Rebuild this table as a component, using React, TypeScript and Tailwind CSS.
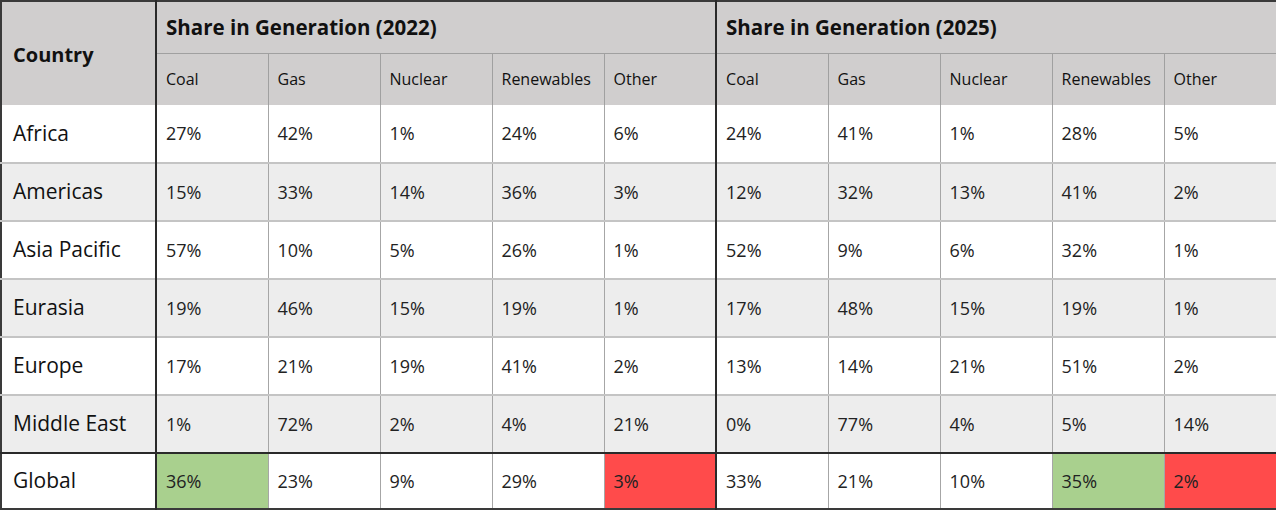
import React from "react";

const cats = ["Coal", "Gas", "Nuclear", "Renewables", "Other"];

type Row = { name: string; a: string[]; b: string[] };

const rows: Row[] = [
  { name: "Africa", a: ["27%", "42%", "1%", "24%", "6%"], b: ["24%", "41%", "1%", "28%", "5%"] },
  { name: "Americas", a: ["15%", "33%", "14%", "36%", "3%"], b: ["12%", "32%", "13%", "41%", "2%"] },
  { name: "Asia Pacific", a: ["57%", "10%", "5%", "26%", "1%"], b: ["52%", "9%", "6%", "32%", "1%"] },
  { name: "Eurasia", a: ["19%", "46%", "15%", "19%", "1%"], b: ["17%", "48%", "15%", "19%", "1%"] },
  { name: "Europe", a: ["17%", "21%", "19%", "41%", "2%"], b: ["13%", "14%", "21%", "51%", "2%"] },
  { name: "Middle East", a: ["1%", "72%", "2%", "4%", "21%"], b: ["0%", "77%", "4%", "5%", "14%"] },
];

const globalA = ["36%", "23%", "9%", "29%", "3%"];
const globalB = ["33%", "21%", "10%", "35%", "2%"];
const globalBgA = ["bg-[#a9d08e]", "", "", "", "bg-[#ff4b4b]"];
const globalBgB = ["", "", "", "bg-[#a9d08e]", "bg-[#ff4b4b]"];

const font = { fontFamily: '"Open Sans", "Liberation Sans", sans-serif' };

export default function App() {
  return (
    <div className="w-[1276px] h-[510px] bg-white text-[#111]" style={font}>
      <table className="w-[1276px] border-collapse table-fixed border-2 border-[#3a3a3a]">
        <colgroup>
          <col className="w-[155px]" />
          {Array.from({ length: 9 }).map((_, i) => (
            <col key={i} className="w-[112px]" />
          ))}
          <col className="w-[113px]" />
        </colgroup>
        <thead>
          <tr className="h-[52px] bg-[#d0cece]">
            <th
              rowSpan={2}
              className="text-left font-bold text-[20px] pl-[11px] pt-[2px] border-r-2 border-[#2a2a2a]"
            >
              Country
            </th>
            <th
              colSpan={5}
              className="text-left font-bold text-[20.5px] pl-[9px] border-r-2 border-[#2a2a2a] border-b border-b-[#a0a0a0]"
            >
              Share in Generation (2022)
            </th>
            <th
              colSpan={5}
              className="text-left font-bold text-[20.5px] pl-[9px] border-b border-b-[#a0a0a0]"
            >
              Share in Generation (2025)
            </th>
          </tr>
          <tr className="h-[52px] bg-[#d0cece]">
            {[0, 1].map((g) =>
              cats.map((c, i) => (
                <th
                  key={g + c}
                  className={`text-left font-normal text-[16px] text-[#111] pl-[9px] ${
                    i === 4 && g === 0 ? "border-r-2 border-r-[#2a2a2a]" : i < 4 ? "border-r border-r-[#a0a0a0]" : ""
                  }`}
                >
                  {c}
                </th>
              ))
            )}
          </tr>
        </thead>
        <tbody>
          {rows.map((r, ri) => (
            <tr
              key={r.name}
              className={`h-[58px] ${ri % 2 === 1 ? "bg-[#ededed]" : "bg-white"} ${
                ri === 5 ? "border-b-2 border-b-[#2a2a2a]" : "border-b-2 border-b-[#c4c4c4]"
              }`}
            >
              <td className="text-left text-[21px] pl-[11px] border-r-2 border-r-[#2a2a2a]">{r.name}</td>
              {[r.a, r.b].map((vals, g) =>
                vals.map((v, i) => (
                  <td
                    key={g + "-" + i}
                    className={`text-left text-[18px] font-normal text-[#222] pl-[9px] ${
                      i === 4 && g === 0 ? "border-r-2 border-r-[#2a2a2a]" : i < 4 ? "border-r border-r-[#a6a6a6]" : ""
                    }`}
                  >
                    {v}
                  </td>
                ))
              )}
            </tr>
          ))}
          <tr className="h-[56px] bg-white">
            <td className="text-left text-[21px] pl-[11px] border-r-2 border-r-[#2a2a2a]">Global</td>
            {[globalA, globalB].map((vals, g) =>
              vals.map((v, i) => {
                const bg = g === 0 ? globalBgA[i] : globalBgB[i];
                return (
                  <td
                    key={"g" + g + "-" + i}
                    className={`text-left text-[18px] font-normal text-[#222] pl-[9px] ${bg} ${
                      i === 4 && g === 0 ? "border-r-2 border-r-[#2a2a2a]" : i < 4 ? "border-r border-r-[#a6a6a6]" : ""
                    }`}
                  >
                    {v}
                  </td>
                );
              })
            )}
          </tr>
        </tbody>
      </table>
    </div>
  );
}
